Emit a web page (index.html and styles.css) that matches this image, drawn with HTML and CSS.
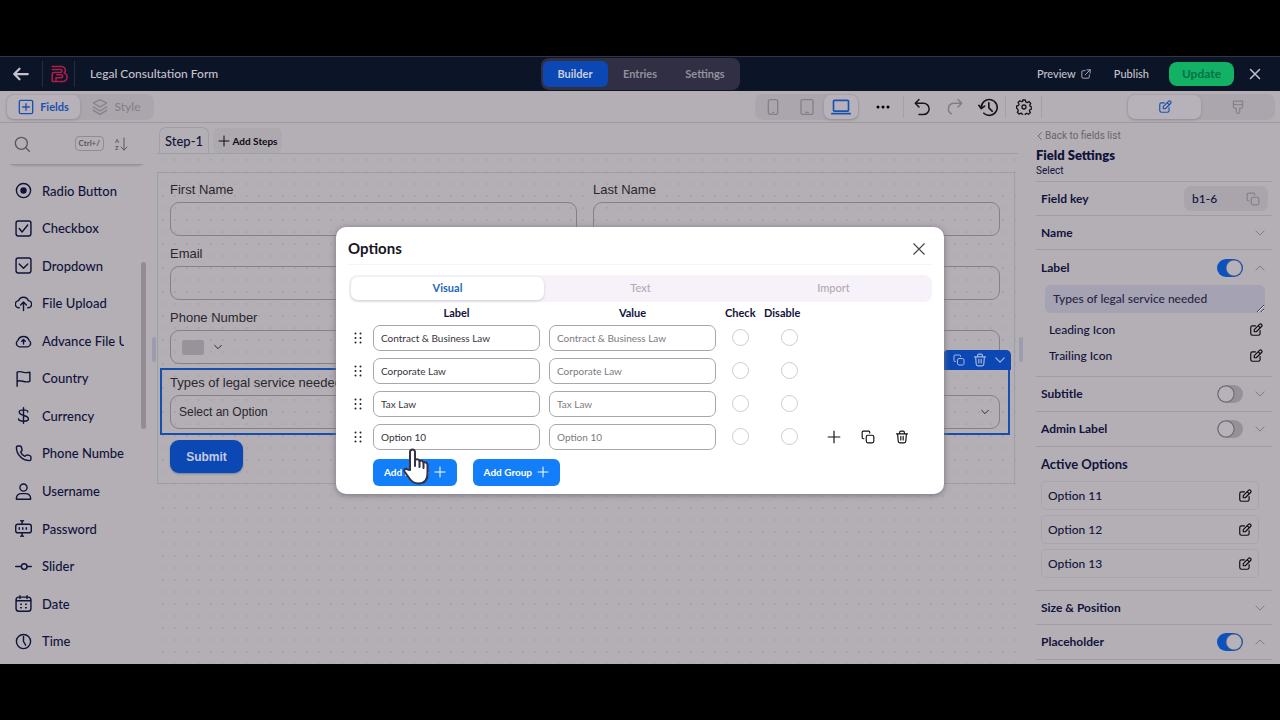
FILE: index.html
```html
<!DOCTYPE html>
<html lang="en">
<head>
<meta charset="utf-8">
<meta name="viewport" content="width=device-width, initial-scale=1">
<title>Legal Consultation Form</title>
<link rel="stylesheet" href="styles.css">
</head>
<body>
<svg class="sprite" aria-hidden="true">
  <symbol id="i-edit" viewBox="0 0 24 24"><path d="M11 5H6a3 3 0 0 0-3 3v10a3 3 0 0 0 3 3h10a3 3 0 0 0 3-3v-5"/><path d="M9 15v-3.500L18 2.500a2.100 2.100 0 0 1 3.500 3.500L12.500 15z"/><path d="M16 5l3 3"/></symbol>
  <symbol id="i-copy" viewBox="0 0 24 24"><rect x="9" y="9" width="13" height="13" rx="3"/><path d="M5 15H4a2 2 0 0 1-2-2V4a2 2 0 0 1 2-2h9a2 2 0 0 1 2 2v1"/></symbol>
  <symbol id="i-trash" viewBox="0 0 24 24"><path d="M2.500 6.500h19M8 6V4a2 2 0 0 1 2-2h4a2 2 0 0 1 2 2v2M4.500 7l1 12a3 3 0 0 0 3 3h7a3 3 0 0 0 3-3l1-12M10 11v6M14 11v6"/></symbol>
  <symbol id="i-down" viewBox="0 0 24 24"><path d="M2 7l10 10L22 7"/></symbol>
  <symbol id="i-up" viewBox="0 0 24 24"><path d="M2 17L12 7l10 10"/></symbol>
  <symbol id="i-plus" viewBox="0 0 24 24"><path d="M12 2v20M2 12h20"/></symbol>
  <symbol id="i-close" viewBox="0 0 24 24"><path d="M3 3l18 18M21 3L3 21"/></symbol>
  <symbol id="i-grip" viewBox="0 0 8 12"><g fill="#222" stroke="none"><circle cx="1.500" cy="1.500" r="1"/><circle cx="6.500" cy="1.500" r="1"/><circle cx="1.500" cy="6" r="1"/><circle cx="6.500" cy="6" r="1"/><circle cx="1.500" cy="10.500" r="1"/><circle cx="6.500" cy="10.500" r="1"/></g></symbol>
</svg>

<div class="app">
  <header class="topbar">
    <div class="topbar-left">
      <button class="icon-btn back" aria-label="Back"><svg class="ic s18 strong" viewBox="0 0 24 24"><path d="M21 12H3M10 5l-7 7 7 7"/></svg></button>
      <span class="brand"><svg class="ic s18 logo" viewBox="0 0 24 24"><path d="M3 2h12a5 5 0 0 1 4 8.500A6 6 0 0 1 16 22H3V12a2 2 0 0 1 2-2h9a2 2 0 0 0 0-4H3M8 22v-5h7a2 2 0 0 0 0-4H9"/></svg></span>
      <h1 class="form-title">Legal Consultation Form</h1>
    </div>
    <nav class="main-tabs">
      <a href="#builder" class="main-tab active">Builder</a>
      <a href="#entries" class="main-tab">Entries</a>
      <a href="#settings" class="main-tab">Settings</a>
    </nav>
    <div class="topbar-right">
      <a href="#preview" class="top-link">Preview <svg class="ic s10" viewBox="0 0 24 24"><path d="M10 4H5a3 3 0 0 0-3 3v12a3 3 0 0 0 3 3h12a3 3 0 0 0 3-3v-5M14 2h8v8M22 2L10 14"/></svg></a>
      <button class="top-link publish">Publish</button>
      <button class="update">Update</button>
      <button class="icon-btn exit" aria-label="Close builder"><svg class="ic s12 strong"><use href="#i-close"/></svg></button>
    </div>
  </header>

  <div class="toolbar">
    <div class="segment left-segment">
      <button class="seg-btn active"><svg class="ic s16" viewBox="0 0 24 24"><rect x="2" y="2" width="20" height="20" rx="2"/><path d="M12 7v10M7 12h10"/></svg>Fields</button>
      <button class="seg-btn"><svg class="ic s16" viewBox="0 0 24 24"><path d="M12 1l10 5-10 6L2 6zM2 12l10 6 10-6M2 17l10 6 10-6"/></svg>Style</button>
    </div>
    <div class="tools">
      <div class="segment device-segment">
        <button class="seg-btn" aria-label="Mobile"><svg class="ic s16" viewBox="0 0 24 24"><rect x="5" y="1" width="14" height="22" rx="3"/><path d="M11 20h2"/></svg></button>
        <button class="seg-btn" aria-label="Tablet"><svg class="ic s16" viewBox="0 0 24 24"><rect x="3" y="1" width="18" height="22" rx="2"/><path d="M10 20h4"/></svg></button>
        <button class="seg-btn active" aria-label="Desktop"><svg class="ic s20" viewBox="0 0 24 24"><rect x="3" y="4" width="18" height="13" rx="1"/><path d="M1 20h22"/></svg></button>
      </div>
      <button class="tool more" aria-label="More"><svg class="s16" viewBox="0 0 16 16"><circle cx="3" cy="8" r="1.500"/><circle cx="8" cy="8" r="1.500"/><circle cx="13" cy="8" r="1.500"/></svg></button>
      <span class="sep"></span>
      <button class="tool" aria-label="Undo"><svg class="ic s18" viewBox="0 0 24 24"><path d="M8 2L3 7l5 5M3 7h11a7.500 7.500 0 0 1 0 15H8"/></svg></button>
      <button class="tool faded" aria-label="Redo"><svg class="ic s18" viewBox="0 0 24 24"><path d="M16 2l5 5-5 5M21 7H11a7.500 7.500 0 0 0-4 14"/></svg></button>
      <button class="tool" aria-label="History"><svg class="ic s20" viewBox="0 0 24 24"><path d="M4 13a9.500 9.500 0 1 1 3 6.500M1 10l3 4 4-3M13 7v6l4 4"/></svg></button>
      <span class="sep"></span>
      <button class="tool" aria-label="Form settings"><svg class="ic s16" viewBox="0 0 24 24"><circle cx="12" cy="12" r="3"/><path d="M10 1.500h4l.7 3 2 .9 2.700-1.600 2.700 2.900-1.500 2.600.8 2 2.300.6v3l-2.800 1-.8 1.800 1.500 2.600-2.800 2.600-2.600-1.500-1.800.8-.8 2.300h-3.800l-.8-2.500-1.800-.8-2.600 1.500-2.600-2.700 1.500-2.500-.9-2L1 14v-3.500l2.800-.8.8-1.800-1.500-2.600 2.700-2.700 2.700 1.500 1.800-.8z"/></svg></button>
      <span class="sep"></span>
    </div>
    <div class="segment right-segment">
      <button class="seg-btn active" aria-label="Field settings"><svg class="ic s14"><use href="#i-edit"/></svg></button>
      <button class="seg-btn" aria-label="Field style"><svg class="ic s14" viewBox="0 0 24 24"><path d="M4 2h16v9a3 3 0 0 1-3 3h-2v6a3 3 0 0 1-6 0v-6H7a3 3 0 0 1-3-3zM4 8c5-2 8 2 16-1"/></svg></button>
    </div>
  </div>

  <div class="workspace">
    <aside class="fields">
      <div class="search">
        <svg class="ic s16" viewBox="0 0 24 24"><circle cx="11" cy="11" r="9"/><path d="M18 18l5 5"/></svg>
        <input class="search-input" type="text" aria-label="Search fields">
        <kbd class="key">Ctrl+/</kbd>
        <button class="icon-btn" aria-label="Sort A to Z"><svg class="s14" viewBox="0 0 14 14"><path class="ic sort-arrow" d="M9 1v12M6 10l3 3 3-3"/><text x="0" y="6" class="az">A</text><text x="0" y="13" class="az">Z</text></svg></button>
      </div>
      <ul class="field-list">
        <li><svg class="ic" viewBox="0 0 24 24"><circle cx="12" cy="12" r="10"/><circle cx="12" cy="12" r="3.500" fill="currentColor"/></svg><span>Radio Button</span></li>
        <li><svg class="ic" viewBox="0 0 24 24"><rect x="1.500" y="1.500" width="21" height="21" rx="3"/><path d="M6 12l4 5 8-10"/></svg><span>Checkbox</span></li>
        <li><svg class="ic" viewBox="0 0 24 24"><rect x="1.500" y="1.500" width="21" height="21" rx="3"/><path d="M6 10l6 6 6-6"/></svg><span>Dropdown</span></li>
        <li><svg class="ic" viewBox="0 0 24 24"><path d="M6 18a5 5 0 0 1-1-10 7.500 7.500 0 0 1 14 0 5 5 0 0 1-1 10M12 22V10M8 14l4-4 4 4"/></svg><span>File Upload</span></li>
        <li><svg class="ic" viewBox="0 0 24 24"><path d="M6 21a5 5 0 0 1-2-9 8.500 8.500 0 0 1 16 0 5 5 0 0 1-2 9zM12 17v-6M9.500 13l2.500-2.500 2.500 2.500"/></svg><span>Advance File Upload</span></li>
        <li><svg class="ic" viewBox="0 0 24 24"><path d="M3 23V3c6-3 10 3 18 0v13c-8 3-12-3-18 0"/></svg><span>Country</span></li>
        <li><svg class="ic" viewBox="0 0 24 24"><path d="M12 1v22M18 7c0-4-12-4-12 0 0 6 13 4 13 10 0 4-13 4-14 0"/></svg><span>Currency</span></li>
        <li><svg class="ic" viewBox="0 0 24 24"><path d="M2 3c0-1 1-1.500 2-1.500h3c1 0 1.500.5 2 1.500l1 4c0 1-1 2-2 3 1 3 3 5 6 6 1-1 2-2 3-2l4 1c1 .5 1.500 1 1.500 2v3c0 1-1 2-2 2C10 22 2 13 2 3z"/></svg><span>Phone Number</span></li>
        <li><svg class="ic" viewBox="0 0 24 24"><circle cx="12" cy="6.500" r="5"/><path d="M2 23v-2a7 7 0 0 1 7-6h6a7 7 0 0 1 7 6v2z"/></svg><span>Username</span></li>
        <li><svg class="ic" viewBox="0 0 24 24"><rect x="1" y="6" width="22" height="12" rx="3"/><path d="M8 1c3 0 2 2 2 4M12 1c-3 0-2 2-2 4M8 23c3 0 2-2 2-4M12 23c-3 0-2-2-2-4M6 11v2M11 11v2M16 11v2"/></svg><span>Password</span></li>
        <li><svg class="ic" viewBox="0 0 24 24"><circle cx="13" cy="12" r="4"/><path d="M1 12h8M17 12h6"/></svg><span>Slider</span></li>
        <li><svg class="ic" viewBox="0 0 24 24"><rect x="1.500" y="3" width="21" height="20" rx="4"/><path d="M2 8h20M7 1v4M17 1v4M8 13h1M15 13h1M8 18h1M15 18h1"/></svg><span>Date</span></li>
        <li><svg class="ic" viewBox="0 0 24 24"><circle cx="12" cy="12" r="10"/><path d="M12 5v7l3 5"/></svg><span>Time</span></li>
      </ul>
      <span class="scroll-thumb"></span>
      <span class="resizer"></span>
    </aside>

    <main class="canvas">
      <div class="steps">
        <button class="step">Step-1</button>
        <button class="add-step"><svg class="ic s12"><use href="#i-plus"/></svg>Add Steps</button>
      </div>
      <div class="stage">
        <form class="form">
          <div class="row">
            <div class="field"><label for="first">First Name</label><input id="first" class="box" type="text"></div>
            <div class="field"><label for="last">Last Name</label><input id="last" class="box" type="text"></div>
          </div>
          <div class="field"><label for="email">Email</label><input id="email" class="box" type="email"></div>
          <div class="field"><label for="phone">Phone Number</label>
            <div class="box phone"><span class="flag"></span><svg class="ic s8 bold"><use href="#i-down"/></svg><input id="phone" class="phone-input" type="tel"></div>
          </div>
          <div class="selected">
            <div class="actions">
              <button type="button" aria-label="Duplicate field"><svg class="ic s12"><use href="#i-copy"/></svg></button>
              <button type="button" aria-label="Delete field"><svg class="ic s14"><use href="#i-trash"/></svg></button>
              <button type="button" aria-label="More field actions"><svg class="ic s10 bold"><use href="#i-down"/></svg></button>
            </div>
            <label for="service">Types of legal service needed</label>
            <div class="select-wrap"><select id="service" class="box"><option>Select an Option</option></select><svg class="ic s8 bold"><use href="#i-down"/></svg></div>
          </div>
          <button type="button" class="submit">Submit</button>
        </form>
      </div>
    </main>

    <aside class="panel">
      <span class="resizer"></span>
      <a class="back-link" href="#fields"><svg class="ic s8 bold" viewBox="0 0 24 24"><path d="M16 2L6 12l10 10"/></svg>Back to fields list</a>
      <h2 class="panel-title">Field Settings</h2>
      <p class="panel-type">Select</p>
      <section class="prop short key-prop"><h3>Field key</h3><span class="keybox">b1-6<button class="icon-btn" aria-label="Copy key"><svg class="ic s14"><use href="#i-copy"/></svg></button></span></section>
      <section class="prop short"><h3>Name</h3><button class="icon-btn" aria-label="Expand name"><svg class="ic s10"><use href="#i-down"/></svg></button></section>
      <section class="prop open"><h3>Label</h3><input type="checkbox" class="switch" aria-label="Label on" checked><button class="icon-btn" aria-label="Collapse label"><svg class="ic s10"><use href="#i-up"/></svg></button></section>
      <div class="label-body">
        <textarea class="label-text" aria-label="Label text" rows="1">Types of legal service needed</textarea>
        <div class="icon-row"><span>Leading Icon</span><button class="icon-btn" aria-label="Edit leading icon"><svg class="ic s14"><use href="#i-edit"/></svg></button></div>
        <div class="icon-row"><span>Trailing Icon</span><button class="icon-btn" aria-label="Edit trailing icon"><svg class="ic s14"><use href="#i-edit"/></svg></button></div>
      </div>
      <section class="prop"><h3>Subtitle</h3><input type="checkbox" class="switch" aria-label="Subtitle on"><button class="icon-btn" aria-label="Expand subtitle"><svg class="ic s10"><use href="#i-down"/></svg></button></section>
      <section class="prop"><h3>Admin Label</h3><input type="checkbox" class="switch" aria-label="Admin label on"><button class="icon-btn" aria-label="Expand admin label"><svg class="ic s10"><use href="#i-down"/></svg></button></section>
      <div class="active-options">
        <h3>Active Options</h3>
        <div class="option-card"><span>Option 11</span><button class="icon-btn" aria-label="Edit option 11"><svg class="ic s14"><use href="#i-edit"/></svg></button></div>
        <div class="option-card"><span>Option 12</span><button class="icon-btn" aria-label="Edit option 12"><svg class="ic s14"><use href="#i-edit"/></svg></button></div>
        <div class="option-card"><span>Option 13</span><button class="icon-btn" aria-label="Edit option 13"><svg class="ic s14"><use href="#i-edit"/></svg></button></div>
      </div>
      <section class="prop short"><h3>Size &amp; Position</h3><button class="icon-btn" aria-label="Expand size"><svg class="ic s10"><use href="#i-down"/></svg></button></section>
      <section class="prop"><h3>Placeholder</h3><input type="checkbox" class="switch" aria-label="Placeholder on" checked><button class="icon-btn" aria-label="Collapse placeholder"><svg class="ic s10"><use href="#i-up"/></svg></button></section>
    </aside>
  </div>

  <div class="overlay">
    <div class="modal" role="dialog" aria-labelledby="modal-title">
      <div class="modal-head"><h2 id="modal-title">Options</h2><button class="icon-btn" aria-label="Close"><svg class="ic s14"><use href="#i-close"/></svg></button></div>
      <div class="modal-tabs"><button class="active">Visual</button><button>Text</button><button>Import</button></div>
      <div class="opt-row opt-head"><span></span><span>Label</span><span>Value</span><span>Check</span><span class="head-disable">Disable</span></div>
      <div class="opt-rows">
        <div class="opt-row"><svg class="grip"><use href="#i-grip"/></svg><input class="opt-input" aria-label="Label 1" value="Contract &amp; Business Law"><input class="opt-input" aria-label="Value 1" placeholder="Contract &amp; Business Law"><input type="checkbox" class="dot" aria-label="Check 1"><input type="checkbox" class="dot" aria-label="Disable 1"></div>
        <div class="opt-row"><svg class="grip"><use href="#i-grip"/></svg><input class="opt-input" aria-label="Label 2" value="Corporate Law"><input class="opt-input" aria-label="Value 2" placeholder="Corporate Law"><input type="checkbox" class="dot" aria-label="Check 2"><input type="checkbox" class="dot" aria-label="Disable 2"></div>
        <div class="opt-row"><svg class="grip"><use href="#i-grip"/></svg><input class="opt-input" aria-label="Label 3" value="Tax Law"><input class="opt-input" aria-label="Value 3" placeholder="Tax Law"><input type="checkbox" class="dot" aria-label="Check 3"><input type="checkbox" class="dot" aria-label="Disable 3"></div>
        <div class="opt-row"><svg class="grip"><use href="#i-grip"/></svg><input class="opt-input" aria-label="Label 4" value="Option 10"><input class="opt-input" aria-label="Value 4" placeholder="Option 10"><input type="checkbox" class="dot" aria-label="Check 4"><input type="checkbox" class="dot" aria-label="Disable 4">
          <div class="row-actions"><button class="icon-btn" aria-label="Add"><svg class="ic s14"><use href="#i-plus"/></svg></button><button class="icon-btn" aria-label="Duplicate"><svg class="ic s14"><use href="#i-copy"/></svg></button><button class="icon-btn" aria-label="Delete"><svg class="ic s14"><use href="#i-trash"/></svg></button></div></div>
      </div>
      <div class="modal-foot">
        <button class="primary">Add More <svg class="ic s12"><use href="#i-plus"/></svg></button>
        <button class="primary">Add Group <svg class="ic s12"><use href="#i-plus"/></svg></button>
      </div>
      <svg class="cursor" viewBox="0 0 28 38"><path d="M8 22V4a2.500 2.500 0 0 1 5 0v8c2-1.500 4-.5 4.500 1 2-1 3.500 0 4 1.500 2-.5 3.500 0 4 2v9c0 6-3 10-9 10-5 0-7-2-9-5l-5-7c-1-2 1-3.500 3-2z"/><path d="M13 12v6M17.500 13v6M21.500 15v5"/></svg>
    </div>
  </div>
</div>
</body>
</html>
```
FILE: styles.css
```css
* { box-sizing: border-box; }
body {
  margin: 0;
  padding: 56px 0;
  min-height: 100vh;
  background: #000;
  color: #11133b;
  font: 500 13px/16px Lato, "Liberation Sans", sans-serif;
}
h1, h2, h3, p, ul { margin: 0; padding: 0; font: inherit; }
button, input, textarea, select { font: inherit; color: inherit; margin: 0; }
button { display: inline-flex; align-items: center; justify-content: center; border: 0; padding: 0; background: none; white-space: nowrap; }
a { color: inherit; text-decoration: none; }
.sprite { position: absolute; width: 0; height: 0; }
.ic { fill: none; stroke: currentColor; stroke-width: 2; stroke-linecap: round; stroke-linejoin: round; flex: none; }
.s8 { width: 8px; height: 8px; }
.s10 { width: 10px; height: 10px; }
.s12 { width: 12px; height: 12px; }
.s14 { width: 14px; height: 14px; }
.s16 { width: 16px; height: 16px; }
.s18 { width: 18px; height: 18px; }
.s20 { width: 20px; height: 20px; }
.bold { stroke-width: 3; }
.strong { stroke-width: 3; }

.app {
  position: relative;
  display: flex;
  flex-direction: column;
  height: calc(100vh - 112px);
  min-height: 600px;
  overflow: hidden;
  background: #b4afb5;
}

/* Top bar */
.topbar {
  display: grid;
  grid-template-columns: 1fr auto 1fr;
  align-items: center;
  height: 35px;
  flex: none;
  background: #0c1528;
  border-top: 1px solid #35353f;
  color: #c5c1cb;
}
.topbar-left { display: flex; align-items: center; }
.back { width: 42px; }
.brand { display: flex; justify-content: center; width: 33px; padding: 4px 0; border: solid #252d3f; border-width: 0 1px; }
.logo { color: #ad1e48; }
.form-title { margin-left: 15px; font-size: 12px; }
.main-tabs { display: flex; padding: 3px 2px; border-radius: 8px; background: #302f43; font-weight: 700; font-size: 11px; }
.main-tab { width: 65px; padding: 5px 0; border-radius: 6px; text-align: center; color: #93909f; }
.main-tab.active { background: #0b48b4; color: #c9cddd; }
.topbar-right { display: flex; align-items: center; justify-content: flex-end; }
.top-link { display: flex; align-items: center; gap: 5px; font-size: 11px; }
.publish { margin-left: 23px; }
.update { margin-left: 20px; width: 65px; height: 24px; border-radius: 8px; background: #12b164; color: #087246; font-size: 12px; font-weight: 700; }
.exit { width: 42px; height: 24px; margin-right: 4px; }

/* Toolbar */
.toolbar { display: flex; align-items: center; height: 32px; flex: none; padding: 0 5px 0 6px; border-bottom: 1px solid #9e9aa0; }
.segment { display: flex; padding: 1px; border-radius: 8px; background: #aba6ad; }
.seg-btn { gap: 6px; height: 24px; border-radius: 7px; color: #858088; font-size: 12px; }
.seg-btn.active { background: #b7b2b9; color: #1c50af; box-shadow: 0 1px 3px #918c95; }
.left-segment .seg-btn, .right-segment .seg-btn { width: 73px; }
.left-segment .active { font-weight: 700; font-size: 11px; }
.device-segment { margin-right: 7px; }
.device-segment .seg-btn { width: 34px; }
.tools { display: flex; align-items: center; margin-left: auto; margin-right: 84px; color: #17151d; }
.tool { width: 33px; height: 24px; }
.more { width: 34px; margin-right: 2px; }
.faded { color: #817d84; }
.sep { width: 1px; height: 22px; margin: 0 1px; background: #a5a0a7; }

.workspace { display: grid; grid-template-columns: 157px minmax(0, 1fr) 262px; flex: 1; min-height: 0; }

/* Field list */
.fields { position: relative; display: flex; flex-direction: column; min-height: 0; padding-bottom: 4px; }
.search { display: flex; align-items: center; gap: 6px; height: 42px; margin: 0 14px 0 10px; padding: 0 14px 0 4px; border-bottom: 1px solid #97929a; box-shadow: 0 3px 3px -3px #817c85; color: #5b5762; }
.search-input { flex: 1; min-width: 0; border: 0; background: none; }
.key { padding: 0 3px; border: 1px solid #918c94; border-radius: 4px; font: 700 8px/13px Lato, sans-serif; }
.search .icon-btn { margin-left: 5px; }
.sort-arrow { stroke-width: 1px; }
.az { font: 700 6px Lato, sans-serif; fill: currentColor; }
.field-list { display: flex; flex-direction: column; flex: 1; padding-top: 7px; list-style: none; }
.field-list li { display: flex; align-items: center; flex: 1; gap: 10px; width: 124px; padding-left: 15px; overflow: hidden; white-space: nowrap; }
.field-list svg { width: 17px; height: 17px; }
.scroll-thumb { position: absolute; right: 11px; top: 139px; width: 5px; height: 167px; border-radius: 3px; background: #928d94; }
.resizer { position: absolute; right: 1px; top: 214px; width: 4px; height: 25px; border-radius: 2px; background: #9c9caf; }

/* Canvas */
.canvas { display: flex; flex-direction: column; min-width: 0; font-family: "Liberation Sans", sans-serif; color: #29262e; }
.steps { display: flex; align-items: flex-end; gap: 4px; height: 31px; flex: none; padding-left: 2px; border-bottom: 1px solid #99a0a6; font-family: Lato, sans-serif; }
.step { width: 50px; height: 26px; border: 1px solid #9aa0ae; border-bottom: 0; border-radius: 7px 7px 0 0; color: #11133b; }
.add-step { gap: 3px; width: 69px; height: 25px; border-radius: 6px; background: #aea9af; color: #0d0a12; font-size: 10px; font-weight: 700; }
.stage { flex: 1; padding: 18px 3px 0 0; background: radial-gradient(circle, #aaa5ac 1px, transparent 1px) 0 0 / 12px 12px; }
.form { padding: 0 14px 10px 12px; border: 1px solid #98a2a5; font-size: 13px; line-height: 18px; }
.row { display: grid; grid-template-columns: 1fr 1fr; gap: 16px; }
.field { display: flex; flex-direction: column; gap: 3px; padding: 8px 0 1px; }
.box { width: 100%; height: 34px; border: 1px solid #858087; border-radius: 9px; background: none; }
.phone { display: flex; align-items: center; gap: 10px; padding-left: 11px; }
.flag { width: 22px; height: 15px; border-radius: 2px; background: #98939a; }
.phone-input { flex: 1; border: 0; background: none; }
.selected { position: relative; display: flex; flex-direction: column; gap: 3px; margin: 3px -10px 0; padding: 4px 8px; border: 2px solid #174fae; }
.select-wrap { display: grid; align-items: center; }
.select-wrap > * { grid-area: 1 / 1; }
.select-wrap svg { justify-self: end; margin-right: 11px; pointer-events: none; }
.select-wrap select { appearance: none; padding: 0 24px 0 8px; font-size: 12px; }
.actions { position: absolute; right: -3px; bottom: 100%; display: flex; align-items: center; gap: 8px; height: 20px; padding: 0 6px 0 10px; border-radius: 5px 5px 0 0; background: #0b48b4; color: #a8b7db; }
.submit { width: 73px; height: 33px; margin-top: 5px; border-radius: 9px; background: #0b48b4; color: #c6cce0; font-size: 12px; font-weight: 700; box-shadow: 0 1px 2px #77809a; }

/* Settings panel */
.panel { position: relative; display: flex; flex-direction: column; padding: 5px 8px 0 18px; min-height: 0; }
.panel .resizer { right: auto; left: 1px; }
.back-link { display: flex; align-items: center; gap: 1px; color: #69646d; font: 10px/16px Roboto, sans-serif; }
.panel-title { line-height: 23px; font-weight: 800; }
.panel-type { padding-bottom: 6px; border-bottom: 1px solid #a19ca3; font: 10px/8px Roboto, sans-serif; }
.prop { display: flex; align-items: center; gap: 12px; height: 35px; flex: none; padding: 0 7px 0 5px; border-bottom: 1px solid #a19ca3; }
.short { height: 34px; }
.key-prop { padding-right: 4px; }
.prop h3 { flex: 1; font-size: 12px; font-weight: 700; }
.prop > .icon-btn { color: #75707a; }
.keybox { display: flex; align-items: center; justify-content: space-between; width: 84px; height: 25px; padding: 0 8px; border-radius: 7px; background: #aaa5ac; font-size: 12px; }
.keybox .icon-btn { color: #858088; }
.open { border-bottom: 0; }
.switch { appearance: none; width: 26px; height: 18px; border-radius: 9px; background: radial-gradient(circle at 9px 9px, #b7b2b9 7px, #66616c 8px, transparent 9px) #969198; }
.switch:checked { background: radial-gradient(circle at 17px 9px, #b7b2b9 7px, #34568e 8px, transparent 9px) #0c52bd; }
.label-body { padding: 0 0 7px 9px; border-bottom: 1px solid #a19ca3; font-size: 12px; }
.label-text { display: block; width: 220px; max-width: 100%; height: 28px; margin-bottom: 4px; padding: 6px 8px; border: 0; border-radius: 6px; background: #a5a2b4; color: #292540; resize: vertical; overflow: hidden; }
.icon-row { display: flex; align-items: center; justify-content: space-between; height: 26px; padding: 0 9px 0 4px; }
.icon-row .icon-btn, .option-card .icon-btn { color: #0d0a12; }
.active-options { padding: 9px 13px 12px 5px; border-bottom: 1px solid #a19ca3; }
.active-options h3 { padding-bottom: 4px; font-weight: 700; }
.option-card { display: flex; align-items: center; justify-content: space-between; height: 29px; margin-top: 5px; padding: 0 6px; border: 1px solid #aaa5ac; border-radius: 5px; font-size: 12px; }

/* Options dialog */
.overlay { position: absolute; inset: 0; display: flex; align-items: center; justify-content: center; }
.modal { position: relative; width: 608px; max-width: 90%; padding: 8px 12px; border-radius: 10px; background: #fff; box-shadow: 0 1px 6px #77727a; }
.modal-head { display: flex; align-items: center; justify-content: space-between; height: 30px; padding: 0 6px 0 0; border-bottom: 1px solid #f8f5f9; }
.modal-head h2 { padding-bottom: 2px; font-size: 15px; font-weight: 700; color: #17151d; }
.modal-head .icon-btn { color: #4c4850; }
.modal-tabs { display: grid; grid-template-columns: repeat(3, 1fr); height: 27px; margin: 10px 0 0 1px; padding: 2px; border-radius: 8px; background: #f7f2f9; font-size: 11px; }
.modal-tabs button { border-radius: 7px; color: #b0abb2; }
.modal-tabs .active { background: #fff; color: #1e67bd; box-shadow: 0 1px 3px #d1cbd4; font-weight: 700; }
.opt-row { display: grid; grid-template-columns: 16px 167px 167px 30px 50px 1fr; align-items: center; column-gap: 9px; height: 26px; }
.opt-row.opt-head { height: 23px; font-size: 11px; font-weight: 700; text-align: center; }
.head-disable { margin-right: 14px; }
.opt-rows { display: grid; gap: 7px; }
.grip { width: 8px; height: 12px; margin-left: 6px; }
.opt-input { width: 100%; height: 26px; padding: 0 7px; border: 1px solid #aaa7ac; border-radius: 7px; font-size: 10px; font-weight: 400; color: #37343b; }
.opt-input::placeholder { color: #7d7a80; opacity: 1; }
.dot { appearance: none; justify-self: center; width: 17px; height: 17px; border: 1px solid #cfccd1; border-radius: 50%; }
.row-actions { display: flex; gap: 20px; padding-left: 4px; color: #111; }
.modal-foot { display: flex; gap: 16px; margin-top: 9px; padding-left: 25px; }
.primary { gap: 5px; height: 27px; padding: 0 11px; border-radius: 6px; background: #127efa; color: #fff; font-size: 10px; font-weight: 700; }
.cursor { position: absolute; left: 66px; top: 221px; width: 28px; height: 38px; fill: #fff; stroke: #363143; stroke-width: 2; stroke-linejoin: round; stroke-linecap: round; }
```
